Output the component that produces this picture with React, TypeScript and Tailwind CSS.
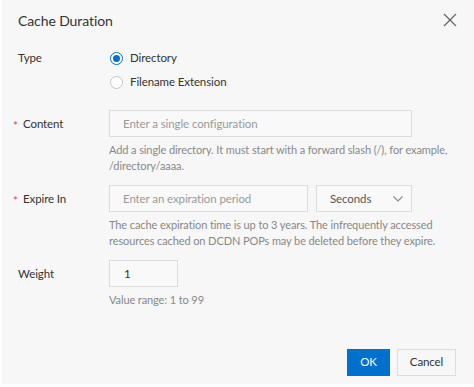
const font = { fontFamily: 'Lato, "Liberation Sans", sans-serif', letterSpacing: "-0.1px" };

function Label({ text, required }: { text: string; required?: boolean }) {
  return (
    <div className="relative flex h-[27px] w-[91px] shrink-0 items-center text-[11.5px] text-[#333]">
      {required && <span className="absolute left-[-5px] top-[7px] text-[#e84545]">*</span>}
      <span className={required ? "pl-[5px]" : ""}>{text}</span>
    </div>
  );
}

function Radio({ checked, label }: { checked?: boolean; label: string }) {
  return (
    <div className="flex h-[24px] items-center gap-[7px]">
      <span
        className={
          "ml-[1px] flex size-[13px] items-center justify-center rounded-full border bg-white " +
          (checked ? "border-[#0070cc]" : "border-[#c4c4c4]")
        }
      >
        {checked && <span className="size-[7px] rounded-full bg-[#0070cc]" />}
      </span>
      <span className="text-[11.5px] text-[#333]">{label}</span>
    </div>
  );
}

function Help({ children }: { children: React.ReactNode }) {
  return <p className="mt-[5px] w-[345px] text-[11px] leading-[15.5px] text-[#888]">{children}</p>;
}

export default function App() {
  return (
    <div className="h-[387px] w-[474px] bg-white pl-[2px]" style={font}>
      <div className="h-[384px] bg-[#f7f7f7] pl-[16px] pr-[18px]">
        <div className="flex h-[40px] items-center justify-between">
          <h2 className="text-[14px] text-[#333]">Cache Duration</h2>
          <svg width="14" height="14" viewBox="0 0 14 14" className="mr-[-1px]">
            <path d="M1 1L13 13M13 1L1 13" stroke="#666" strokeWidth="1.3" fill="none" />
          </svg>
        </div>

        <div className="mt-[6px] flex">
          <div className="flex h-[24px] w-[91px] items-center text-[11.5px] text-[#333]">Type</div>
          <div>
            <Radio checked label="Directory" />
            <Radio label="Filename Extension" />
          </div>
        </div>

        <div className="mt-[16px] flex">
          <Label text="Content" required />
          <div>
            <div className="flex h-[27px] w-[303px] items-center border border-[#dcdcdc] bg-[#f9f9f9] px-[13px] text-[11.5px] text-[#999]">
              Enter a single configuration
            </div>
            <Help>Add a single directory. It must start with a forward slash (/), for example, /directory/aaaa.</Help>
          </div>
        </div>

        <div className="mt-[12px] flex">
          <Label text="Expire In" required />
          <div>
            <div className="flex w-[303px] gap-[8px]">
              <div className="flex h-[27px] w-[199px] items-center border border-[#dcdcdc] bg-[#f9f9f9] px-[13px] text-[11.5px] text-[#999]">
                Enter an expiration period
              </div>
              <div className="flex h-[27px] flex-1 items-center justify-between border border-[#dcdcdc] bg-[#f9f9f9] pl-[13px] pr-[6px] text-[11.5px] text-[#555]">
                Seconds
                <svg width="10" height="6" viewBox="0 0 10 6" className="mr-[2px]">
                  <path d="M0.5 0.5L5 5L9.5 0.5" stroke="#888" strokeWidth="1.1" fill="none" />
                </svg>
              </div>
            </div>
            <Help>
              The cache expiration time is up to 3 years. The infrequently accessed resources cached on DCDN POPs may be deleted before they expire.
            </Help>
          </div>
        </div>

        <div className="mt-[12px] flex">
          <Label text="Weight" />
          <div>
            <div className="flex h-[27px] w-[69px] items-center border border-[#dcdcdc] bg-[#f9f9f9] px-[14px] text-[11.5px] text-[#333]">
              1
            </div>
            <Help>Value range: 1 to 99</Help>
          </div>
        </div>

        <div className="mt-[41px] flex justify-end gap-[7px]">
          <button className="h-[27px] w-[43px] bg-[#0070cc] text-[11.5px] text-white">OK</button>
          <button className="h-[27px] w-[59px] border border-[#dcdcdc] bg-[#f7f7f7] text-[11.5px] text-[#333]">
            Cancel
          </button>
        </div>
      </div>
    </div>
  );
}
